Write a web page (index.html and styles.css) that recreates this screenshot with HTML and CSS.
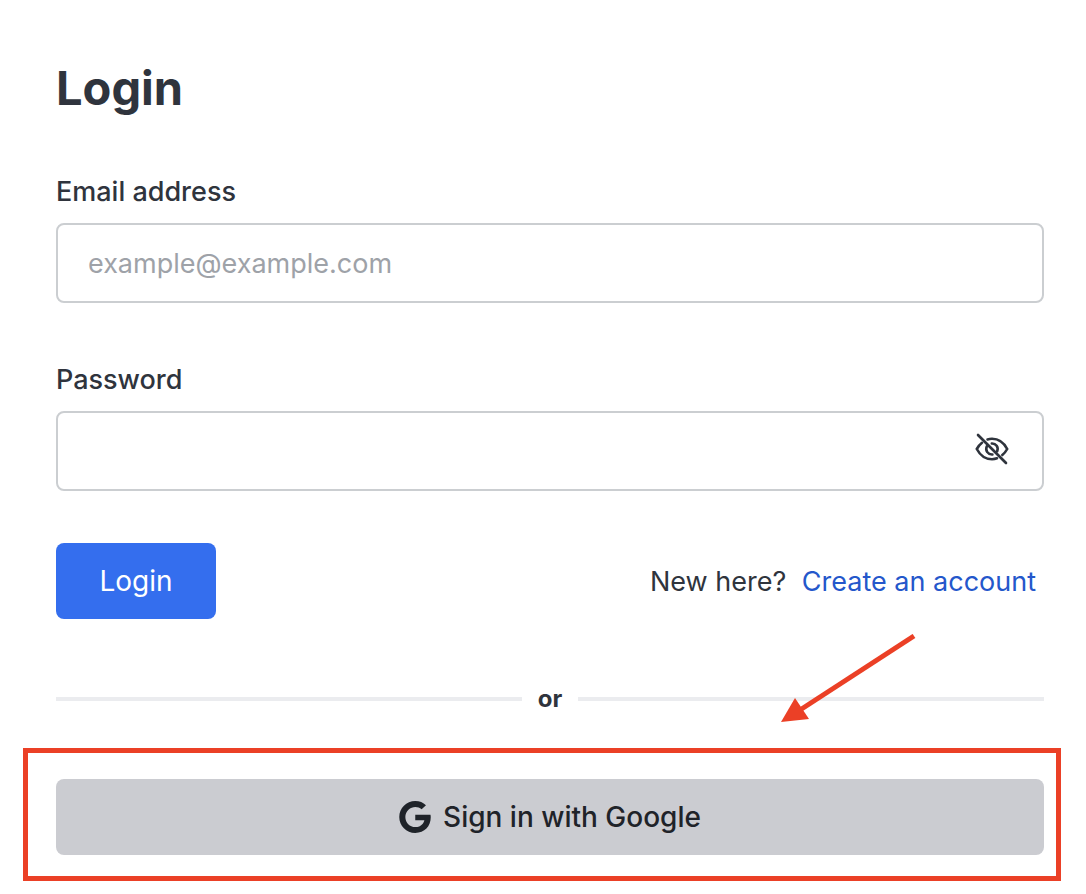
FILE: index.html
```html
<!DOCTYPE html>
<html lang="en">
<head>
<meta charset="UTF-8">
<meta name="viewport" content="width=device-width, initial-scale=1">
<title>Login</title>
<link rel="stylesheet" href="styles.css">
</head>
<body>
	<main class="login">
		<h1 class="title">Login</h1>
		<form class="form">
			<label class="label" for="email">Email address</label>
			<input class="input" id="email" type="email" placeholder="example@example.com">

			<label class="label" for="password">Password</label>
			<div class="password">
				<input class="input" id="password" type="password">
				<button class="toggle" type="button" aria-label="Show password">
					<svg width="36" height="36" viewBox="0 0 36 36" fill="none" stroke="#2f343d" stroke-width="2.6" stroke-linecap="round">
						<path d="M8 11.800C5.900 13.400 4.200 15.500 2.800 18C6 24.100 11.500 28.200 18 28.200C20 28.200 21.500 27.900 23 27.300"/>
						<path d="M13.500 8.400C14.900 8 16.400 7.800 18 7.800C24.500 7.800 30 11.900 33.200 18C31.900 20.400 30.300 22.400 28.300 24"/>
						<path d="M12.800 15.300C11 19.600 14 23.800 18.400 23.500"/>
						<path d="M17.800 12.500C22 12.300 24.800 16.400 23.200 20.200"/>
						<path d="M4 4L32 32"/>
					</svg>
				</button>
			</div>

			<div class="actions">
				<button class="button primary" type="submit">Login</button>
				<p class="register">New here? <a class="link" href="#">Create an account</a></p>
			</div>
		</form>

		<div class="divider">
			<span class="or">or</span>
			<svg class="arrow" width="136" height="90" viewBox="0 0 136 90">
				<path d="M133 2L19 76" stroke="#eb4026" stroke-width="5"/>
				<path d="M0 88L14 64L28 85Z" fill="#eb4026"/>
			</svg>
		</div>

		<div class="highlight">
			<button class="button google" type="button">
				<svg width="32" height="32" viewBox="0 8 488 496" fill="#1f2329">
					<path d="M488 261.800C488 403.300 391.100 504 248 504C110.800 504 0 393.200 0 256S110.800 8 248 8c66.800 0 123 24.500 166.300 64.900l-67.500 64.900C258.500 52.600 94.300 116.600 94.300 256c0 86.500 69.100 156.600 153.700 156.600c98.200 0 135-70.400 140.800-106.900H248v-85.300h236.100c2.300 12.700 3.900 24.900 3.900 41.400z"/>
				</svg>
				Sign in with Google
			</button>
		</div>
	</main>
</body>
</html>
```

FILE: styles.css
```css
* {
	box-sizing: border-box;
}
body {
	margin: 0;
	background: #fff;
	color: #2f343d;
	font-family: Inter, "Liberation Sans", sans-serif;
	font-size: 27px;
	line-height: 40px;
}
.login {
	padding: 60px 42px 12px 56px;
}
.title {
	margin: 0 0 56px;
	font-size: 47px;
	font-weight: 700;
	line-height: 56px;
}
.label {
	display: block;
	margin-bottom: 11px;
	font-weight: 500;
}
.input {
	display: block;
	width: 100%;
	height: 80px;
	padding: 0 30px;
	border: 2px solid #cbced1;
	border-radius: 8px;
	background: #fff;
	color: inherit;
	font: inherit;
}
.input::placeholder {
	color: #9ea2a8;
	opacity: 1;
}
.form > .input {
	margin-bottom: 57px;
}
.password {
	position: relative;
}
.password .input {
	padding-right: 84px;
}
/* sits over the right end of the password box */
.toggle {
	position: absolute;
	top: 20px;
	right: 34px;
	padding: 0;
	border: 0;
	background: none;
	cursor: pointer;
}
.toggle svg {
	display: block;
}
.actions {
	display: flex;
	align-items: center;
	justify-content: space-between;
	margin-top: 52px;
}
.button {
	height: 76px;
	padding: 0;
	border: 0;
	border-radius: 8px;
	font: inherit;
	font-size: 28px;
	cursor: pointer;
}
.primary {
	width: 160px;
	background: #346eee;
	color: #fff;
}
.register {
	margin: 0;
	padding: 2px 8px 0 0;
}
.link {
	margin-left: 8px;
	color: #2457cb;
	text-decoration: none;
}
.divider {
	display: flex;
	align-items: center;
	gap: 16px;
	position: relative;
	margin-top: 60px;
}
.divider::before,
.divider::after {
	content: "";
	flex: 1;
	height: 4px;
	background: #ebecef;
}
.or {
	font-size: 24px;
	font-weight: 700;
}
.arrow {
	position: absolute;
	top: -45px;
	right: 127px;
}
.highlight {
	margin: 29px -17px 0 -33px;
	padding: 26px 12px 21px 28px;
	border: 5px solid #eb4026;
}
.google {
	display: flex;
	align-items: center;
	justify-content: center;
	gap: 12px;
	width: 100%;
	background: #cbccd1;
	color: #1f2329;
	font-weight: 500;
}
```
